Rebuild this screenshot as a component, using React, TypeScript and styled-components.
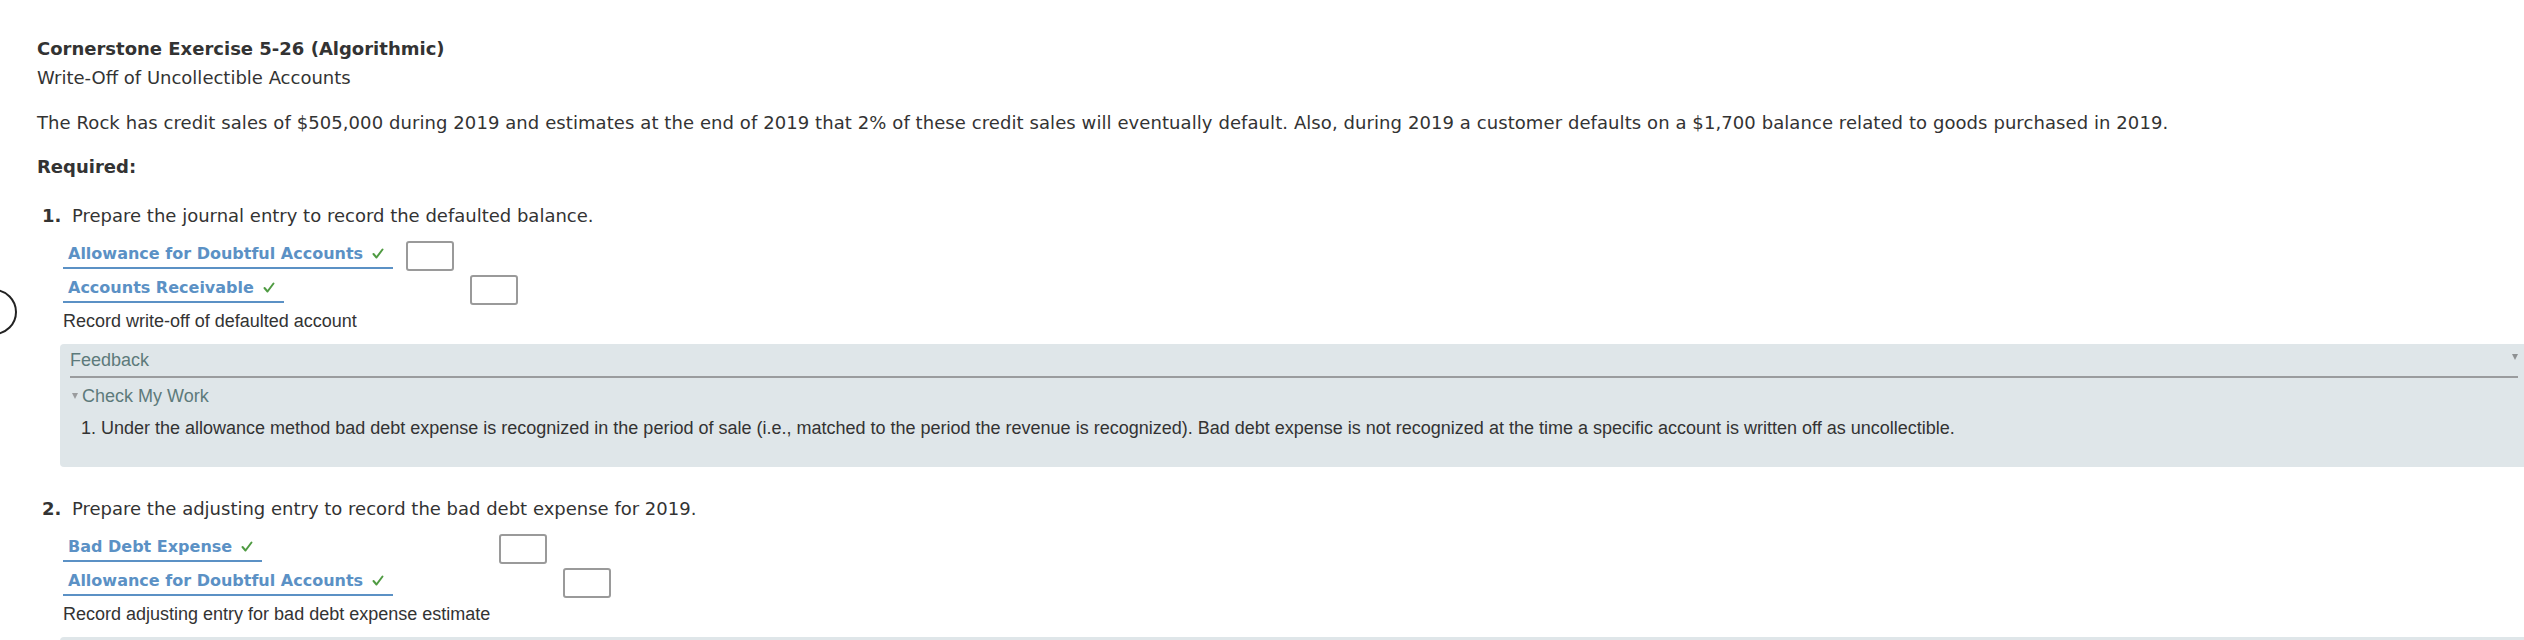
import * as React from "react"
import styled, { createGlobalStyle } from "styled-components"

interface Line {
  account: string
  side: "debit" | "credit"
}

interface Entry {
  num: number
  prompt: string
  accountWidth: number
  lines: Line[]
  note: string
}

const entries: Entry[] = [
  {
    num: 1,
    prompt: "Prepare the journal entry to record the defaulted balance.",
    accountWidth: 343,
    lines: [
      { account: "Allowance for Doubtful Accounts", side: "debit" },
      { account: "Accounts Receivable", side: "credit" },
    ],
    note: "Record write-off of defaulted account",
  },
  {
    num: 2,
    prompt: "Prepare the adjusting entry to record the bad debt expense for 2019.",
    accountWidth: 436,
    lines: [
      { account: "Bad Debt Expense", side: "debit" },
      { account: "Allowance for Doubtful Accounts", side: "credit" },
    ],
    note: "Record adjusting entry for bad debt expense estimate",
  },
]

const feedback: Record<number, string[]> = {
  1: [
    "1. Under the allowance method bad debt expense is recognized in the period of sale (i.e., matched to the period the revenue is recognized). Bad debt expense is not recognized at the time a specific account is written off as uncollectible.",
  ],
  2: [],
}

const Check = () => (
  <CheckSvg viewBox="0 0 12 11" aria-hidden>
    <polyline points="1.5,6 4.5,9.5 10.5,1.5" />
  </CheckSvg>
)

const FeedbackPanel = ({ items }: { items: string[] }) => (
  <Panel>
    <PanelHead>
      <span>Feedback</span>
      <Caret />
    </PanelHead>
    <Toggle>
      <SmallCaret />
      Check My Work
    </Toggle>
    {items.map((t) => (
      <Item key={t}>{t}</Item>
    ))}
  </Panel>
)

const EntryBlock = ({ e }: { e: Entry }) => (
  <>
    <Prompt>
      <Num>{e.num}.</Num>
      <span>{e.prompt}</span>
    </Prompt>
    <Journal accountWidth={e.accountWidth}>
      {e.lines.map((l) => (
        <React.Fragment key={l.account}>
          <AccountCell>
            <Account>
              {l.account}
              <Check />
            </Account>
          </AccountCell>
          <AmountCell side={l.side}>
            <AmountBox />
          </AmountCell>
        </React.Fragment>
      ))}
    </Journal>
    <Note>{e.note}</Note>
  </>
)

export default () => (
  <>
    <Global />
    <NavRing />
    <Page>
      <Title>Cornerstone Exercise 5-26 (Algorithmic)</Title>
      <Subtitle>Write-Off of Uncollectible Accounts</Subtitle>
      <Para>
        The Rock has credit sales of $505,000 during 2019 and estimates at the end of 2019 that 2% of these
        credit sales will eventually default. Also, during 2019 a customer defaults on a $1,700 balance related
        to goods purchased in 2019.
      </Para>
      <Required>Required:</Required>
      <Entries>
        {entries.map((e) => (
          <Section key={e.num}>
            <EntryBlock e={e} />
            <FeedbackPanel items={feedback[e.num]} />
          </Section>
        ))}
      </Entries>
    </Page>
  </>
)

const Global = createGlobalStyle`
  html, body {
    margin: 0;
    padding: 0;
    background: #fff;
    overflow: hidden;
  }
  body {
    font-family: "DejaVu Sans", Verdana, sans-serif;
    color: #333;
  }
`

const NavRing = styled.div`
  position: absolute;
  left: -29px;
  top: 289px;
  width: 42px;
  height: 42px;
  border: 2.5px solid #222;
  border-radius: 50%;
`

const Page = styled.div`
  padding: 34px 0 0 37px;
`

const Title = styled.div`
  font-size: 18px;
  line-height: 29px;
  font-weight: bold;
`

const Subtitle = styled.div`
  font-size: 18px;
  line-height: 29px;
`

const Para = styled.p`
  margin: 16px 0 0;
  font-size: 18px;
  line-height: 29px;
  letter-spacing: 0.08px;
  white-space: nowrap;
`

const Required = styled.div`
  margin-top: 15px;
  font-size: 18px;
  line-height: 29px;
  font-weight: bold;
`

const Entries = styled.div`
  margin-top: 20px;
  display: flex;
  flex-direction: column;
  gap: 27px;
`

const Section = styled.div``

const Prompt = styled.div`
  display: flex;
  font-size: 18px;
  line-height: 29px;
  padding-left: 5px;
`

const Num = styled.span`
  width: 30px;
  font-weight: bold;
`

const Journal = styled.div<{ accountWidth: number }>`
  display: grid;
  grid-template-columns: ${(p) => p.accountWidth}px 64px 64px;
  grid-auto-rows: 34px;
  margin-top: 9px;
  padding-left: 26px;
`

const AccountCell = styled.div`
  grid-column: 1;
  display: flex;
  align-items: center;
`

const Account = styled.span`
  display: inline-flex;
  align-items: center;
  gap: 9px;
  padding: 0 9px 3px 5px;
  line-height: 20px;
  font-size: 16px;
  font-weight: bold;
  color: #5b91c5;
  border-bottom: 2px solid #5b91c5;
  white-space: nowrap;
`

const CheckSvg = styled.svg`
  width: 12px;
  height: 11px;
  fill: none;
  stroke: #4f9b42;
  stroke-width: 2;
  stroke-linecap: round;
  stroke-linejoin: round;
`

const AmountCell = styled.div<{ side: "debit" | "credit" }>`
  grid-column: ${(p) => (p.side === "debit" ? 2 : 3)};
  display: flex;
  align-items: center;
`

const AmountBox = styled.div`
  box-sizing: border-box;
  width: 48px;
  height: 30px;
  border: 2px solid #9a9a9a;
  border-radius: 3px;
  background: #fff;
`

const Note = styled.div`
  margin-top: 3px;
  padding-left: 26px;
  font-family: "Liberation Sans", Arial, sans-serif;
  font-size: 18px;
  line-height: 22px;
  color: #333;
`

const Panel = styled.div`
  margin-top: 12px;
  margin-left: 23px;
  padding: 5px 6px 28px 10px;
  background: #dfe6e9;
  border-radius: 4px 0 0 4px;
  font-family: "Liberation Sans", Arial, sans-serif;
  font-size: 18px;
  line-height: 22px;
`

const PanelHead = styled.div`
  display: flex;
  justify-content: space-between;
  padding-bottom: 5px;
  border-bottom: 2px solid #9a9c9e;
  color: #5d7a7b;
`

const Caret = styled.span`
  margin-top: 5px;
  width: 0;
  height: 0;
  border-left: 3.5px solid transparent;
  border-right: 3.5px solid transparent;
  border-top: 6px solid #8e9193;
`

const Toggle = styled.div`
  display: flex;
  align-items: center;
  margin-top: 7px;
  padding-left: 2px;
  color: #5d7a7b;
`

const SmallCaret = styled.span`
  margin-right: 4px;
  width: 0;
  height: 0;
  border-left: 3px solid transparent;
  border-right: 3px solid transparent;
  border-top: 6px solid #9a9c9e;
`

const Item = styled.div`
  margin-top: 10px;
  padding-left: 11px;
  color: #333;
  white-space: nowrap;
`
